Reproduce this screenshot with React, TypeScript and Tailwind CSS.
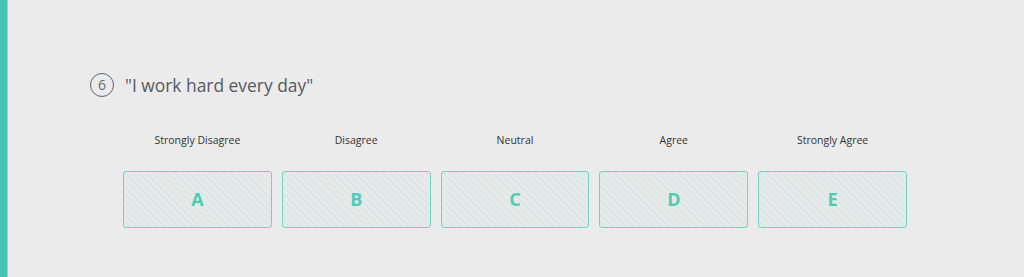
const options = [
  { label: "Strongly Disagree", letter: "A" },
  { label: "Disagree", letter: "B" },
  { label: "Neutral", letter: "C" },
  { label: "Agree", letter: "D" },
  { label: "Strongly Agree", letter: "E" },
];

export default function App() {
  return (
    <div
      className="flex h-[277px] w-full bg-[#ebebeb]"
      style={{ fontFamily: '"Open Sans", "Noto Sans", sans-serif' }}
    >
      {/* Left accent bar */}
      <div className="h-full w-[8px] shrink-0 bg-[#45c4b5] border-r border-[#8fdcd2]" />

      <div className="flex-1 pl-[82px] pt-[73px]">
        {/* Question */}
        <div className="flex items-center gap-[11px]">
          <div className="flex h-[24px] w-[24px] items-center justify-center rounded-full border-[1.5px] border-[#5f6469] text-[14px] leading-none text-[#666b70]">
            6
          </div>
          <div className="text-[17.4px] leading-[24px] text-[#555a5f]">"I work hard every day"</div>
        </div>

        {/* Scale */}
        <div className="ml-[33px] mt-[33px] grid w-[784px] grid-cols-5 gap-x-[10px]">
          {options.map((o) => (
            <div key={o.letter} className="flex flex-col items-center">
              <div className="h-[20px] text-[10.5px] leading-[20px] text-[#333]">{o.label}</div>
              <div className="mt-[21px] flex h-[57px] w-full items-center justify-center rounded-[3px] border border-[#70d4c5] bg-[repeating-linear-gradient(45deg,#e6ebea_0px,#e6ebea_3px,#dde6e4_3px,#dde6e4_5px)] text-[18px] font-bold text-[#4fcbb8]">
                {o.letter}
              </div>
            </div>
          ))}
        </div>
      </div>
    </div>
  );
}
